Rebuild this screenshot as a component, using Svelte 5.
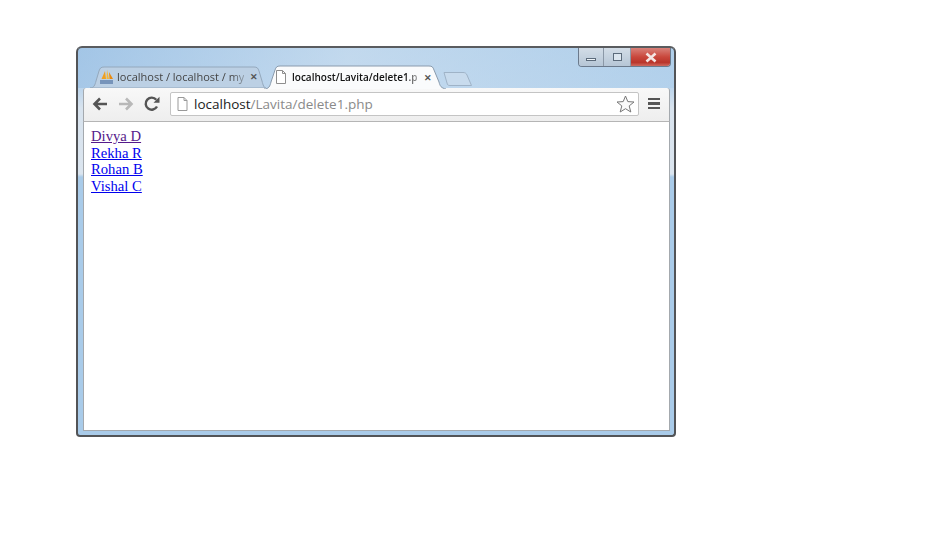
<script>
  const links = [
    { name: "Divya D", visited: true },
    { name: "Rekha R" },
    { name: "Rohan B" },
    { name: "Vishal C" }
  ];
</script>

<div class="window">
  <div class="caption">
    <button class="cap min" aria-label="Minimize"><span class="dash"></span></button>
    <button class="cap max" aria-label="Maximize"><span class="box"></span></button>
    <button class="cap close" aria-label="Close">
      <svg width="16" height="11" viewBox="0 0 16 11"><path d="M3.5 1.5 L12.5 9.5 M12.5 1.5 L3.5 9.5" stroke="#f4e6e4" stroke-width="2.6" /></svg>
    </button>
  </div>

  <div class="tabstrip">
    <div class="tab inactive">
      <svg class="shape" viewBox="0 0 176 22" preserveAspectRatio="none">
        <path d="M0 22 C4 22 5 19 6 15 L9 5 C10 2 11 1 14 1 L164 1 C167 1 168 2 169 5 L172 15 C173 19 174 22 176 22 Z" fill="#bcd0e4" stroke="#94a8bc" />
      </svg>
      <svg class="fav" width="16" height="16" viewBox="0 0 16 16">
        <path d="M2.500 10 L6 2 L7 10 Z" fill="#f0a020" />
        <path d="M7.500 10 L8 0.500 L10 10 Z" fill="#f7b733" />
        <path d="M10.500 10 L10 3 L14 10 Z" fill="#e88a10" />
        <rect x="1" y="11" width="13" height="4" fill="#5a7ba8" opacity="0.7" />
      </svg>
      <span class="title fade">localhost / localhost / my</span>
      <span class="x">✕</span>
    </div>
    <div class="tab active">
      <svg class="shape" viewBox="0 0 182 24" preserveAspectRatio="none">
        <path d="M0 24 C5 24 6 21 7 17 L11 5 C12 2 13 1 16 1 L165 1 C168 1 169 2 170 5 L175 17 C176 21 177 23 182 24" fill="#fafbfc" stroke="#8a9bad" />
      </svg>
      <svg class="fav doc" width="12" height="14" viewBox="0 0 12 14">
        <path d="M1.5 .5 H7.5 L10.5 3.5 V13.5 H1.5 Z M7.5 .5 V3.5 H10.5" fill="#fff" stroke="#8e8e8e" />
      </svg>
      <span class="title fade dark">localhost/Lavita/delete1.p</span>
      <span class="x">✕</span>
    </div>
    <svg class="newtab" width="30" height="16" viewBox="0 0 30 16">
      <path d="M1 1.500 H20 C22 1.500 23 2 24 4 L28.500 14.500 H7 C5 14.500 4.500 14 4 12 Z" fill="#c8dbed" stroke="#9fb3c7" />
    </svg>
  </div>

  <div class="toolbar">
    <svg class="nav" width="16" height="14" viewBox="0 0 16 14">
      <path d="M15 7 H4 M8 1.500 L2.500 7 L8 12.500" fill="none" stroke="#555" stroke-width="2.600" />
    </svg>
    <svg class="nav" width="16" height="14" viewBox="0 0 16 14">
      <path d="M1 7 H12 M8 1.500 L13.500 7 L8 12.500" fill="none" stroke="#b8b8b8" stroke-width="2.600" />
    </svg>
    <svg class="nav" width="16" height="16" viewBox="0 0 16 16">
      <path d="M13 10.500 A6 6 0 1 1 12.300 3.800" fill="none" stroke="#555" stroke-width="2.400" />
      <path d="M9.500 6.800 H15.500 V.8 Z" fill="#555" />
    </svg>
    <div class="omnibox">
      <svg width="11" height="14" viewBox="0 0 11 14">
        <path d="M1 .5 H7 L10 3.500 V13.500 H1 Z M7 .5 V3.500 H10" fill="#fff" stroke="#999" />
      </svg>
      <span class="url"><b>localhost</b>/Lavita/delete1.php</span>
      <svg class="star" width="19" height="18" viewBox="0 0 19 18">
        <path d="M9.500 1 L11.800 6.600 L18 7 L13.200 10.900 L14.800 17 L9.500 13.700 L4.200 17 L5.800 10.900 L1 7 L7.200 6.600 Z" fill="#fbfbfb" stroke="#777" />
      </svg>
    </div>
    <div class="menu"><i></i><i></i><i></i></div>
  </div>

  <div class="page">
    {#each links as link}
      <a href="#top" class:visited={link.visited}>{link.name}</a>
    {/each}
  </div>
</div>

<style>
  :global(body) {
    margin: 0;
    background: #fff;
  }

  .window {
    position: relative;
    box-sizing: border-box;
    width: 600px;
    height: 391px;
    margin: 46px 0 0 76px;
    padding: 0 4px 4px 5px;
    display: flex;
    flex-direction: column;
    border: 2px solid #525457;
    border-top-color: #5a5c5f;
    border-radius: 6px 6px 4px 4px;
    background:
      linear-gradient(100deg, rgba(150, 190, 228, 0.6), rgba(205, 224, 241, 0.5) 45%, rgba(170, 205, 235, 0.5) 100%) top / 100% 40px no-repeat,
      linear-gradient(to bottom, #b6d1ea 0, #bcd5ec 40px, #d8e3ee 60px, #dbe5ef 126px, #a9cbe9 129px);
  }

  .caption {
    position: absolute;
    top: 0;
    right: 3px;
    display: flex;
    height: 18px;
    border: 1px solid #6b7a8c;
    border-top: 0;
    border-radius: 0 0 4px 4px;
    overflow: hidden;
  }

  .cap {
    padding: 0;
    border: 0;
    display: flex;
    align-items: center;
    justify-content: center;
    background: linear-gradient(#d3dde7, #b6c6d6);
  }

  .min {
    width: 25px;
    border-right: 1px solid #8b98a7;
  }

  .max {
    width: 27px;
    border-right: 1px solid #8b98a7;
  }

  .close {
    width: 39px;
    background: linear-gradient(#d9827a 0%, #c9473c 50%, #b9352b 80%, #cf6a5f 100%);
  }

  .dash {
    width: 10px;
    height: 3px;
    margin-top: 5px;
    background: #eef3f7;
    border: 1px solid #5c6b7b;
    box-sizing: border-box;
  }

  .box {
    width: 9px;
    height: 8px;
    box-sizing: border-box;
    border: 1.500px solid #5c6b7b;
    background: #dce6ef;
  }

  .tabstrip {
    height: 40px;
    flex: none;
    display: flex;
    align-items: flex-end;
    padding-left: 7px;
  }

  .tab {
    position: relative;
    display: flex;
    align-items: center;
    font: 11px "Open Sans", "Liberation Sans", sans-serif;
    color: #444;
  }

  .inactive {
    width: 176px;
    height: 22px;
    flex: none;
    margin-right: -2px;
    padding: 0 0 1px 9px;
    box-sizing: border-box;
  }

  .active {
    width: 182px;
    height: 24px;
    flex: none;
    margin-right: -3px;
    margin-bottom: -1px;
    padding-left: 11px;
    box-sizing: border-box;
  }

  .shape {
    position: absolute;
    inset: 0;
    width: 100%;
    height: 100%;
  }

  .fav,
  .title,
  .x {
    position: relative;
  }

  .doc {
    margin-right: 2px;
  }

  .title {
    margin-left: 2px;
    white-space: nowrap;
  }

  .active .title {
    margin-left: 3px;
    font-size: 10px;
    color: #111;
    font-weight: 600;
  }

  .fade {
    -webkit-mask-image: linear-gradient(to right, #000 90%, rgba(0, 0, 0, 0.35));
    mask-image: linear-gradient(to right, #000 90%, rgba(0, 0, 0, 0.35));
  }

  .x {
    margin-left: 6px;
    font-size: 9px;
    font-weight: 700;
    color: #555;
  }

  .newtab {
    margin: 0 0 1px 0;
    flex: none;
  }

  .toolbar {
    flex: none;
    height: 34px;
    box-sizing: border-box;
    display: flex;
    align-items: center;
    padding: 0 9px 2px 8px;
    gap: 10px;
    background: linear-gradient(#f8f8f8, #eeeeee);
    border-radius: 3px 3px 0 0;
    border: 1px solid #a4a9ae;
    border-top: 0;
    border-bottom-color: #b5b5b5;
  }

  .omnibox {
    flex: 1;
    height: 24px;
    box-sizing: border-box;
    display: flex;
    align-items: center;
    gap: 6px;
    padding: 0 3px 0 6px;
    background: #fff;
    border: 1px solid #c4c4c4;
    border-radius: 2px;
  }

  .url {
    flex: 1;
    font: 13.500px "Open Sans", "Liberation Sans", sans-serif;
    color: #8a8a8a;
    white-space: nowrap;
  }

  .url b {
    font-weight: 400;
    color: #222;
  }

  .star {
    flex: none;
  }

  .menu {
    width: 12px;
    margin-left: -1px;
    display: flex;
    flex-direction: column;
    gap: 2px;
  }

  .menu i {
    height: 2.500px;
    background: #555;
  }

  .page {
    flex: 1;
    display: flex;
    flex-direction: column;
    align-items: flex-start;
    padding: 6px 7px;
    background: #fff;
    border: 1px solid #a4a9ae;
    border-top: 0;
    font: 14.670px/16.500px "Liberation Serif", serif;
  }

  a {
    color: #0000ee;
  }

  a.visited {
    color: #551a8b;
  }
</style>
